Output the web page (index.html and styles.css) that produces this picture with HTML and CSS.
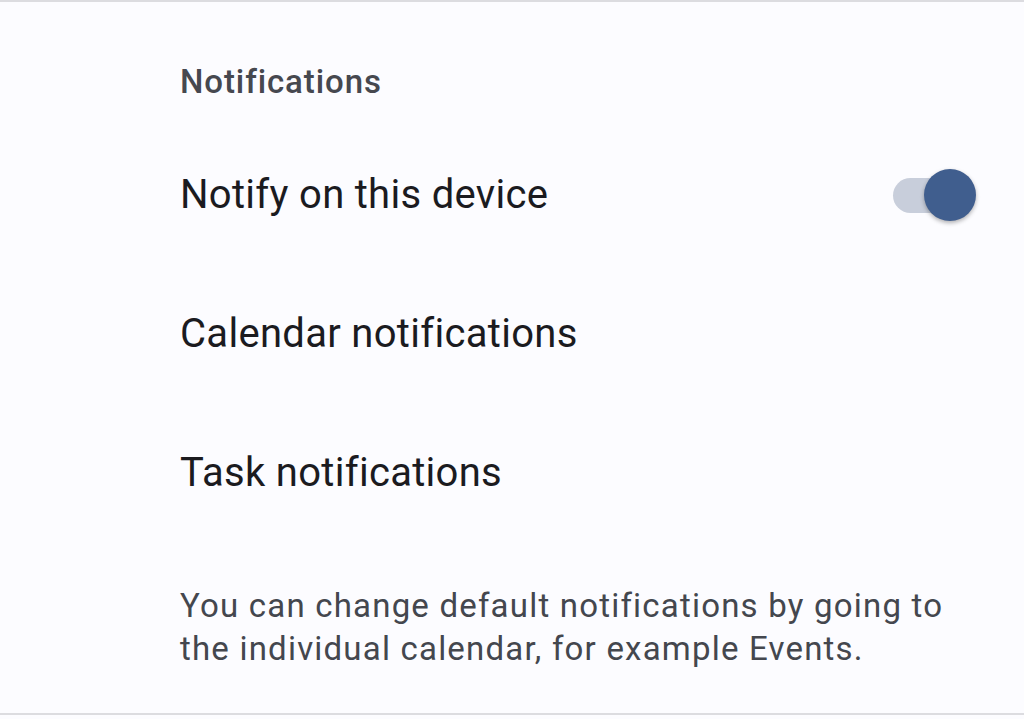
FILE: index.html
```html
<!DOCTYPE html>
<html>
  <head>
    <meta name="viewport" content="width=device-width, initial-scale=1.0">
    <link rel="stylesheet" href="styles.css">
  </head>
  <body>
    <div class="settings-page">
      <h2 class="section-title">Notifications</h2>

      <div class="setting-row">
        <span class="setting-label">Notify on this device</span>
        <button type="button" class="switch switch-on" aria-pressed="true">
          <span class="switch-track"></span>
          <span class="switch-thumb"></span>
        </button>
      </div>
      <div class="setting-row">
        <span class="setting-label">Calendar notifications</span>
      </div>
      <div class="setting-row">
        <span class="setting-label">Task notifications</span>
      </div>

      <p class="help-text">You can change default notifications by going to the individual calendar, for example Events.</p>
    </div>
  </body>
</html>
```

FILE: styles.css
```css
html, body {
  margin: 0;
  height: 100%;
  background-color: #fcfcff;
}
body {
  font-family: Roboto, "Noto Sans", sans-serif;
  overflow: hidden;
}
.settings-page {
  box-sizing: border-box;
  height: 715px;
  border-top: 2px solid #dcdce0;
  border-bottom: 2px solid #dcdce0;
  padding: 0 48px 0 180px;
}
.section-title {
  margin: 0 0 23px;
  padding-top: 60px;
  font-size: 33px;
  font-weight: 500;
  line-height: 40px;
  letter-spacing: 0.9px;
  color: #46484f;
}
.setting-row {
  display: flex;
  justify-content: space-between;
  align-items: center;
  height: 139px;
}
.setting-label {
  font-size: 40px;
  line-height: 48px;
  letter-spacing: 0.3px;
  color: #1b1b1f;
}
.switch {
  position: relative;
  width: 84px;
  height: 52px;
  padding: 0;
  border: none;
  background: none;
}
.switch-track {
  position: absolute;
  left: 1px;
  top: 9px;
  width: 70px;
  height: 35px;
  border-radius: 18px;
  background-color: #c8cedb;
}
.switch-thumb {
  position: absolute;
  right: 0;
  top: 0;
  width: 52px;
  height: 52px;
  border-radius: 50%;
  background-color: #405e8e;
  box-shadow: 0 2px 4px rgba(0, 0, 0, 0.3);
}
.help-text {
  margin: 42px 0 0;
  font-size: 33px;
  line-height: 43px;
  letter-spacing: 1.2px;
  color: #44474e;
}
```
